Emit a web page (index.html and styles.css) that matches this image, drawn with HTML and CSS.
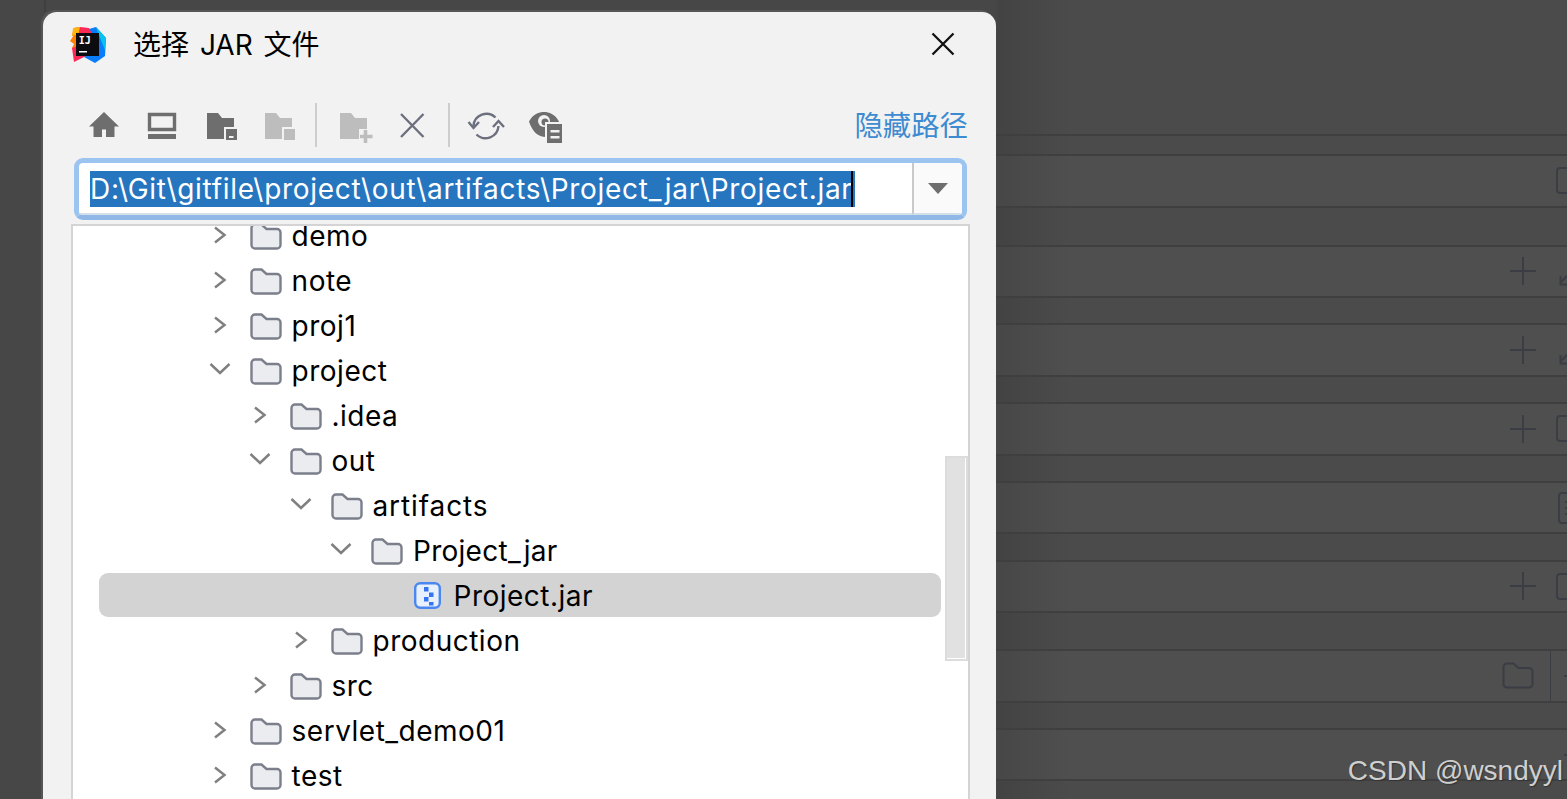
FILE: index.html
```html
<!DOCTYPE html>
<html lang="zh">
<head>
<meta charset="utf-8">
<title>选择 JAR 文件</title>
<link rel="stylesheet" href="styles.css">
</head>
<body>
<svg class="defs" width="0" height="0" aria-hidden="true">
  <symbol id="folder" viewBox="0 0 32 27"><path d="M1.500 5a3.500 3.500 0 0 1 3.500-3.500h6.500l5 4.500H27a3.500 3.500 0 0 1 3.500 3.500V22a3.500 3.500 0 0 1-3.500 3.500H5A3.500 3.500 0 0 1 1.500 22z" fill="#ebecf0" stroke="#7b7f8b" stroke-width="2.400"/></symbol>
  <symbol id="bgfolder" viewBox="0 0 32 27"><path d="M1.500 5a3.500 3.500 0 0 1 3.500-3.500h6.500l5 4.500H27a3.500 3.500 0 0 1 3.500 3.500V22a3.500 3.500 0 0 1-3.500 3.500H5A3.500 3.500 0 0 1 1.500 22z" fill="none" stroke="#3b3d44" stroke-width="2"/></symbol>
  <symbol id="right" viewBox="0 0 24 24"><path d="M7 3.500 16.500 11 7 18.500" fill="none" stroke="#808080" stroke-width="2.500"/></symbol>
  <symbol id="down" viewBox="0 0 24 24"><path d="M2.500 5 12 14 21.500 5" fill="none" stroke="#808080" stroke-width="2.500"/></symbol>
  <symbol id="plus" viewBox="0 0 26 28"><path d="M13 0v28M0 14h26" fill="none" stroke="#3b3d44" stroke-width="2"/></symbol>
</svg>

<main class="backdrop">
  <div class="bg-row gap h22"></div>
  <div class="bg-row tall"><span class="slot"></span><span class="box"></span></div>
  <div class="bg-row gap h39"></div>
  <div class="bg-row tall"><svg class="slot"><use href="#plus"/></svg><svg class="arrow" viewBox="0 0 12 14"><path d="M11 1 2 10M1.500 4v8.500H11" fill="none" stroke="#3b3d44" stroke-width="2"/></svg></div>
  <div class="bg-row gap"></div>
  <div class="bg-row tall"><svg class="slot"><use href="#plus"/></svg><svg class="arrow" viewBox="0 0 12 14"><path d="M11 1 2 10M1.500 4v8.500H11" fill="none" stroke="#3b3d44" stroke-width="2"/></svg></div>
  <div class="bg-row gap"></div>
  <div class="bg-row tall"><svg class="slot"><use href="#plus"/></svg><span class="box"></span></div>
  <div class="bg-row gap"></div>
  <div class="bg-row tall"><span class="slot"></span><span class="box doc"><i></i><i></i><i></i></span></div>
  <div class="bg-row gap"></div>
  <div class="bg-row tall"><svg class="slot"><use href="#plus"/></svg><span class="box"></span></div>
  <div class="bg-row gap h38"></div>
  <div class="bg-row tall path-row"><svg class="bg-folder"><use href="#bgfolder"/></svg><span class="bg-div"></span><span class="bg-dash"></span></div>
  <div class="bg-row gap"></div>
  <div class="bg-row tall path-row last"><span class="bg-dash"></span></div>
</main>

<section class="dialog">
  <header class="title-bar">
    <svg class="logo" viewBox="0 0 36 37">
      <path d="M19 3l7-2 10 11-1 18-10 7-11-6z" fill="#087cfa"/>
      <path d="M26 1l10 11-1 12-7-17z" fill="#07c3f2"/>
      <path d="M4 2l6-1 9 1 3 6-14 3-6-1z" fill="#fe2857"/>
      <path d="M3 2l7-1-2 9H2z" fill="#fdb60d"/>
      <path d="M0 15l4-6h5v16l-7-3 2-4z" fill="#ff8100"/>
      <path d="M2 22l7-2 7 10-12 6z" fill="#fe2857"/>
      <rect x="6" y="7" width="23" height="23" fill="#0c0c10"/>
      <text class="logo-text" x="8.700" y="18">IJ</text>
      <rect x="9" y="25" width="8" height="1.500" fill="#fff"/>
    </svg>
    <h1 class="title">选择 JAR 文件</h1>
    <svg class="close" viewBox="0 0 24 24"><path d="M1.500 1.500l21 21M22.500 1.500l-21 21" stroke="#111" stroke-width="2.300" fill="none"/></svg>
  </header>

  <div class="toolbar">
    <div class="tools">
      <svg class="tool" viewBox="0 0 40 40"><path d="M20 7 5 21.500h4.500V32h8.500v-7.500h4V32h8.500V21.500H35z" fill="#6e6e6e"/></svg>
      <svg class="tool" viewBox="0 0 40 40"><path d="M7.500 9.500h25v15h-25z" fill="none" stroke="#6e6e6e" stroke-width="3.400"/><path d="M6 29h28v5H6z" fill="#6e6e6e"/></svg>
      <svg class="tool" viewBox="0 0 40 40"><path d="M5 8h11l4 5h12v21H5z" fill="#6e6e6e"/><path d="M23 23h13v13H23z" fill="#6e6e6e" stroke="#f2f2f2" stroke-width="2"/><path d="M27 31h4.500v2H27z" fill="#f2f2f2"/></svg>
      <svg class="tool" viewBox="0 0 40 40"><path d="M5 8h11l4 5h12v21H5z" fill="#bdbdbd"/><path d="M23 23h13v13H23z" fill="#bdbdbd" stroke="#f2f2f2" stroke-width="2"/></svg>
      <span class="sep"></span>
      <svg class="tool" viewBox="0 0 40 40"><path d="M4 8h11l4 5h12v21H4z" fill="#bdbdbd"/><path d="M23 24h15v15H23z" fill="#f2f2f2"/><path d="M29.500 25v13M24 31.500h12.500" stroke="#bdbdbd" stroke-width="3.600"/></svg>
      <svg class="tool" viewBox="0 0 40 40"><path d="M9 9l22.500 23M31.500 9 9 32" stroke="#6c707e" stroke-width="2.400" fill="none"/></svg>
      <span class="sep"></span>
      <svg class="tool" viewBox="0 0 40 40"><path d="M7.500 21a13 13 0 0 1 22-8.500M32.500 21a13 13 0 0 1-22 8.500" fill="none" stroke="#6c707e" stroke-width="2.400"/><path d="M2.500 17 7.500 23 13 17M27 22l5.500-6 5.500 6" fill="none" stroke="#6c707e" stroke-width="2.400"/></svg>
      <svg class="tool tall-tool" viewBox="0 0 40 40"><path d="M3 15.500C7 8 13 6 18 6s11 2 15 9.500c-2 3-4 5-6 6.500H20v9c-8 0-13.500-5-17-15.500z" fill="#6e6e6e"/><circle cx="18" cy="15" r="6" fill="#f2f2f2"/><circle cx="19" cy="16" r="3.500" fill="#6e6e6e"/><path d="M20 17h17v21H20z" fill="#6e6e6e" stroke="#f2f2f2" stroke-width="2"/><path d="M24.500 24h9v2.500h-9zM24.500 30h9v2.500h-9z" fill="#f2f2f2"/></svg>
    </div>
    <a class="hide-path">隐藏路径</a>
  </div>

  <div class="field">
    <div class="field-input"><span class="selected">D:\Git\gitfile\project\out\artifacts\Project_jar\Project.jar<i class="caret"></i></span></div>
    <div class="field-drop"><span class="tri"></span></div>
  </div>

  <div class="tree">
    <div class="rows">
      <div class="row d0"><svg class="chev"><use href="#right"/></svg><svg class="ico"><use href="#folder"/></svg><span>demo</span></div>
      <div class="row d0"><svg class="chev"><use href="#right"/></svg><svg class="ico"><use href="#folder"/></svg><span>note</span></div>
      <div class="row d0"><svg class="chev"><use href="#right"/></svg><svg class="ico"><use href="#folder"/></svg><span>proj1</span></div>
      <div class="row d0"><svg class="chev"><use href="#down"/></svg><svg class="ico"><use href="#folder"/></svg><span>project</span></div>
      <div class="row d1"><svg class="chev"><use href="#right"/></svg><svg class="ico"><use href="#folder"/></svg><span>.idea</span></div>
      <div class="row d1"><svg class="chev"><use href="#down"/></svg><svg class="ico"><use href="#folder"/></svg><span>out</span></div>
      <div class="row d2"><svg class="chev"><use href="#down"/></svg><svg class="ico"><use href="#folder"/></svg><span class="wide">artifacts</span></div>
      <div class="row d3"><svg class="chev"><use href="#down"/></svg><svg class="ico"><use href="#folder"/></svg><span class="tight">Project_jar</span></div>
      <div class="row d4 active"><span class="chev"></span><svg class="ico" viewBox="0 0 32 27"><rect x="3.200" y="1.200" width="24.600" height="24.600" rx="5" fill="#e8f0fe" stroke="#4b87f0" stroke-width="2.400"/><path d="M12 5h4.500v4.500H12zM17 10.500h4.500V15H17zM12 15h4.500v4.500H12zM17 20h4.500v3.500H17z" fill="#3574f0"/></svg><span>Project.jar</span></div>
      <div class="row d2"><svg class="chev"><use href="#right"/></svg><svg class="ico"><use href="#folder"/></svg><span>production</span></div>
      <div class="row d1"><svg class="chev"><use href="#right"/></svg><svg class="ico"><use href="#folder"/></svg><span>src</span></div>
      <div class="row d0"><svg class="chev"><use href="#right"/></svg><svg class="ico"><use href="#folder"/></svg><span>servlet_demo01</span></div>
      <div class="row d0"><svg class="chev"><use href="#right"/></svg><svg class="ico"><use href="#folder"/></svg><span>test</span></div>
    </div>
    <div class="scrollbar"></div>
  </div>
</section>

<div class="watermark">CSDN @wsndyyl</div>
</body>
</html>
```

FILE: styles.css
```css
* { box-sizing: border-box; }
html, body { margin: 0; height: 100%; }
body {
  position: relative;
  height: 799px;
  overflow: hidden;
  font-family: Inter, "Noto Sans CJK SC", sans-serif;
  background:
    linear-gradient(#3f3f3f, #3f3f3f) 44px 0 / 2px 12px no-repeat,
    linear-gradient(90deg, #474747 0, #474747 996px, #434343 998px, #4b4b4b 1070px, #4b4b4b 100%);
}
.defs { position: absolute; }

.backdrop { padding: 134px 0 0 46px; }
.bg-row {
  display: flex;
  align-items: center;
  gap: 20px;
  height: 27.250px;
  padding-left: 1464px;
  border-bottom: 2px solid #3f3f3f;
}
.bg-row.h22 { height: 22px; border-top: 2px solid #3f3f3f; }
.bg-row.h39 { height: 39px; }
.bg-row.h38 { height: 38px; }
.bg-row.tall { height: 51.500px; background: rgba(255, 255, 255, .025); }
.slot { flex: none; display: block; width: 26px; height: 28px; }
.box {
  flex: none;
  display: flex;
  flex-direction: column;
  justify-content: center;
  gap: 4px;
  width: 28px;
  height: 27px;
  border: 2px solid #3b3d44;
  border-radius: 4px;
  padding-left: 5px;
}
.box.doc { margin-left: 2px; height: 32px; }
.box i { display: block; height: 2px; background: #3b3d44; }
.arrow { flex: none; width: 12px; height: 14px; margin: 15px 0 0 3px; }
.bg-row.path-row { padding-left: 1456px; gap: 0; }
.bg-folder { width: 32px; height: 27px; flex: none; }
.bg-div { width: 1px; height: 50px; margin-left: 16px; background: #3b3d44; flex: none; }
.bg-dash { width: 3px; height: 2px; margin-left: 13px; background: #3b3d44; flex: none; }
.path-row.last .bg-dash { margin-left: 62px; }

.dialog {
  position: absolute;
  left: 43px;
  top: 12px;
  width: 953px;
  height: 790px;
  padding: 0 26px 0 28px;
  background: #f2f2f2;
  border-radius: 14px 14px 0 0;
  box-shadow: -2px -2px 0 0 #565656;
  overflow: hidden;
}

.title-bar {
  display: flex;
  align-items: center;
  height: 64px;
}
.logo { width: 36px; height: 37px; flex: none; margin-left: -1px; }
.logo-text {
  font-family: "DejaVu Sans Mono", monospace;
  font-weight: 700;
  font-size: 10px;
  fill: #fff;
}
.title {
  margin: 2px 0 0 27px;
  font-size: 28px;
  line-height: 36px;
  font-weight: 400;
  word-spacing: 3px;
  color: #000;
  flex: 1;
}
.close { width: 24px; height: 24px; flex: none; margin-right: 15px; }

.toolbar {
  display: flex;
  align-items: center;
  justify-content: space-between;
  height: 50px;
  margin-top: 24px;
}
.tools {
  display: grid;
  grid-template-columns: 58px 60px 58px 56px 20px 56px 57px 17px 60px 40px;
  align-items: center;
  margin-left: 13px;
}
.tool { display: block; width: 40px; height: 40px; }
.tall-tool { margin-top: 2px; }
.sep { display: block; width: 2px; height: 44px; margin-left: -1px; background: #cdcdcd; }
.hide-path {
  font-size: 28.400px;
  line-height: 36px;
  margin-top: 2px;
  color: #3d8bd0;
  margin-right: 2px;
}

.field {
  position: relative;
  display: flex;
  width: 893px;
  height: 62px;
  margin: 8px 0 0 3px;
  border: 5px solid #9cc4f0;
  border-bottom-color: #8fb8e6;
  border-radius: 9px;
  background: #fff;
  overflow: hidden;
}
.field-input {
  flex: 1;
  display: flex;
  align-items: center;
  padding: 2px 0 0 11px;
  border-bottom: 2px solid #d5dfeb;
  overflow: hidden;
}
.selected {
  position: relative;
  display: block;
  padding-right: 2px;
  font-size: 28px;
  letter-spacing: .7px;
  line-height: 36px;
  white-space: nowrap;
  color: #fff;
  background: #2675bf;
}
.caret {
  position: absolute;
  right: 2px;
  top: 0;
  bottom: 0;
  width: 2px;
  background: #000;
}
.field-drop {
  flex: none;
  display: flex;
  align-items: center;
  justify-content: center;
  width: 50px;
  padding-right: 1px;
  border-left: 2px solid #c9c9c9;
  border-bottom: 2px solid #d5dfeb;
  background: #fafafa;
}
.tri {
  width: 0;
  height: 0;
  border-style: solid;
  border-width: 11px 10px 0;
  border-color: #6e6e6e transparent transparent;
}

.tree {
  position: relative;
  height: 580px;
  margin-top: 4px;
  border: 2px solid #d4d4d4;
  background: #fff;
  overflow: hidden;
}
.rows { margin: -13px 0 0 26px; width: 842px; }
.row {
  display: flex;
  align-items: center;
  height: 45px;
  padding-top: 1px;
  font-size: 28px;
  letter-spacing: .5px;
  color: #000;
  white-space: nowrap;
}
.wide { letter-spacing: .9px; }
.tight { letter-spacing: .27px; }
.row.active { height: 44px; margin-bottom: 1px; background: #d3d3d3; border-radius: 9px; }
.d0 { padding-left: 108.600px; }
.d1 { padding-left: 148.500px; }
.d2 { padding-left: 189.500px; }
.d3 { padding-left: 230px; }
.d4 { padding-left: 270.500px; }
.chev { flex: none; display: block; width: 24px; height: 24px; margin-right: 18px; }
.ico { flex: none; display: block; width: 32px; height: 27px; margin-right: 10px; }

.scrollbar {
  position: absolute;
  right: 0;
  top: 230px;
  width: 23px;
  height: 205px;
  background: #e1e1e1;
  border: 2px solid #dcdcdc;
  box-shadow: inset -1px -1px 0 #fff;
}

.watermark {
  position: absolute;
  right: 4px;
  top: 753px;
  font-family: "Liberation Sans", sans-serif;
  font-size: 28px;
  line-height: 36px;
  color: #cfcfcf;
  text-shadow: 1px 1px 1px #333;
  white-space: nowrap;
}
```
